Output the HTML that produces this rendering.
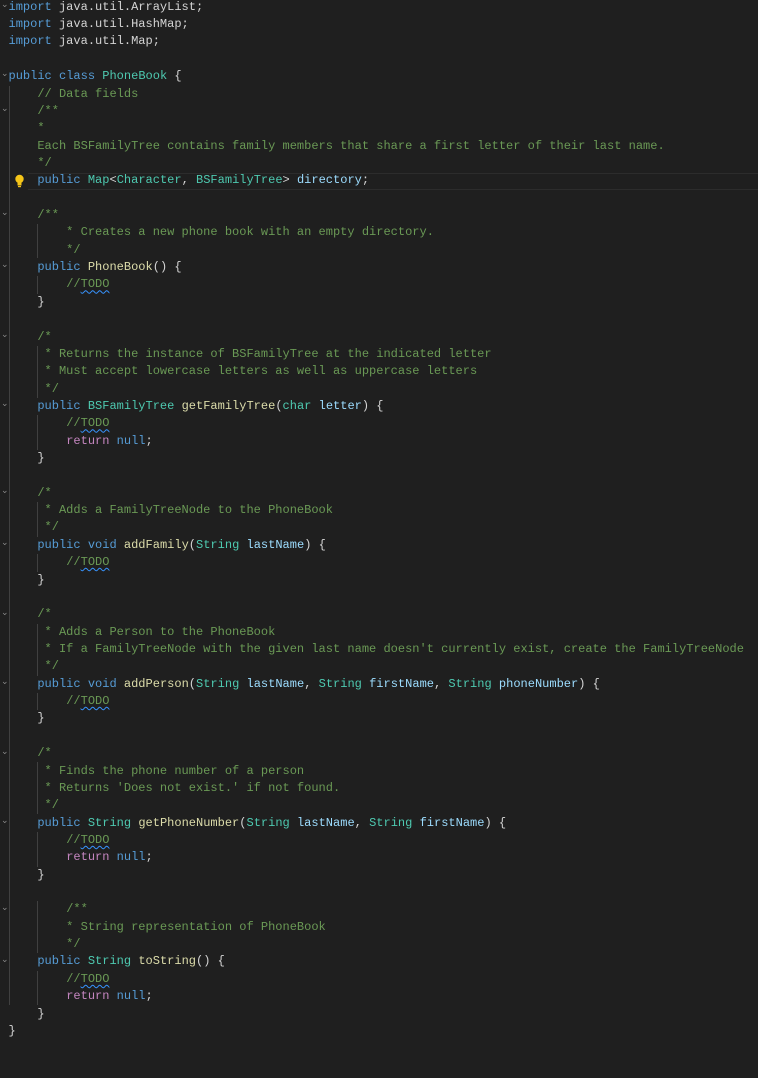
<!DOCTYPE html>
<html><head><meta charset="utf-8"><style>
html,body{margin:0;padding:0;background:#1f1f1f;width:758px;height:1078px;overflow:hidden}
#ed{position:absolute;left:8.5px;top:-1.3px;font-family:"Liberation Mono",monospace;font-size:12.03px;line-height:17.36px;color:#d4d4d4;white-space:pre;margin:0}
.k{color:#569cd6}.t{color:#4ec9b0}.f{color:#dcdcaa}.v{color:#9cdcfe}.c{color:#6a9955}.r{color:#c586c0}
.td{text-decoration:underline wavy #3794ff;text-decoration-thickness:1px;text-underline-offset:2px}
.g{position:absolute;width:1px;background:#404040}
.fa{position:absolute;left:1px;color:#8a8a8a;font-size:9px;font-family:"DejaVu Sans",sans-serif}
.cur{position:absolute;left:28px;right:0;height:15px;border-top:1px solid #2c2c2c;border-bottom:1px solid #2c2c2c}
</style></head><body>
<div class="cur" style="top:173px"></div>
<div class="g" style="left:9px;top:85.5px;height:919.8px"></div>
<div class="g" style="left:37px;top:223.7px;height:34.7px"></div>
<div class="g" style="left:37px;top:276.4px;height:17.4px"></div>
<div class="g" style="left:37px;top:345.9px;height:52px"></div>
<div class="g" style="left:37px;top:415.4px;height:34.7px"></div>
<div class="g" style="left:37px;top:502.2px;height:34.7px"></div>
<div class="g" style="left:37px;top:554.4px;height:17.4px"></div>
<div class="g" style="left:37px;top:623.6px;height:52px"></div>
<div class="g" style="left:37px;top:693px;height:17.4px"></div>
<div class="g" style="left:37px;top:762.4px;height:52px"></div>
<div class="g" style="left:37px;top:831.9px;height:34.7px"></div>
<div class="g" style="left:37px;top:901.4px;height:52px"></div>
<div class="g" style="left:37px;top:970.8px;height:34.7px"></div>
<div style="position:absolute;left:15px;top:173.5px;width:9px;height:14px">
<svg width="9" height="14" viewBox="0 0 9 14"><circle cx="4.5" cy="5" r="4.2" fill="#f5c518"/><rect x="2.5" y="8.5" width="4" height="3" fill="#f5c518"/><rect x="3" y="12" width="3" height="1.2" fill="#f5c518"/></svg></div>
<pre id="ed"><span class="k">import</span> java.util.ArrayList;
<span class="k">import</span> java.util.HashMap;
<span class="k">import</span> java.util.Map;

<span class="k">public</span> <span class="k">class</span> <span class="t">PhoneBook</span> {
    <span class="c">// Data fields</span>
    <span class="c">/**</span>
    <span class="c">*</span>
    <span class="c">Each BSFamilyTree contains family members that share a first letter of their last name.</span>
    <span class="c">*/</span>
    <span class="k">public</span> <span class="t">Map</span>&lt;<span class="t">Character</span>, <span class="t">BSFamilyTree</span>&gt; <span class="v">directory</span>;

    <span class="c">/**</span>
<span class="c">        * Creates a new phone book with an empty directory.</span>
<span class="c">        */</span>
    <span class="k">public</span> <span class="f">PhoneBook</span>() {
        <span class="c">//<span class="td">TODO</span></span>
    }

    <span class="c">/*</span>
<span class="c">     * Returns the instance of BSFamilyTree at the indicated letter</span>
<span class="c">     * Must accept lowercase letters as well as uppercase letters</span>
<span class="c">     */</span>
    <span class="k">public</span> <span class="t">BSFamilyTree</span> <span class="f">getFamilyTree</span>(<span class="t">char</span> <span class="v">letter</span>) {
        <span class="c">//<span class="td">TODO</span></span>
        <span class="r">return</span> <span class="k">null</span>;
    }

    <span class="c">/*</span>
<span class="c">     * Adds a FamilyTreeNode to the PhoneBook</span>
<span class="c">     */</span>
    <span class="k">public</span> <span class="k">void</span> <span class="f">addFamily</span>(<span class="t">String</span> <span class="v">lastName</span>) {
        <span class="c">//<span class="td">TODO</span></span>
    }

    <span class="c">/*</span>
<span class="c">     * Adds a Person to the PhoneBook</span>
<span class="c">     * If a FamilyTreeNode with the given last name doesn't currently exist, create the FamilyTreeNode</span>
<span class="c">     */</span>
    <span class="k">public</span> <span class="k">void</span> <span class="f">addPerson</span>(<span class="t">String</span> <span class="v">lastName</span>, <span class="t">String</span> <span class="v">firstName</span>, <span class="t">String</span> <span class="v">phoneNumber</span>) {
        <span class="c">//<span class="td">TODO</span></span>
    }

    <span class="c">/*</span>
<span class="c">     * Finds the phone number of a person</span>
<span class="c">     * Returns 'Does not exist.' if not found.</span>
<span class="c">     */</span>
    <span class="k">public</span> <span class="t">String</span> <span class="f">getPhoneNumber</span>(<span class="t">String</span> <span class="v">lastName</span>, <span class="t">String</span> <span class="v">firstName</span>) {
        <span class="c">//<span class="td">TODO</span></span>
        <span class="r">return</span> <span class="k">null</span>;
    }

        <span class="c">/**</span>
<span class="c">        * String representation of PhoneBook</span>
<span class="c">        */</span>
    <span class="k">public</span> <span class="t">String</span> <span class="f">toString</span>() {
        <span class="c">//<span class="td">TODO</span></span>
        <span class="r">return</span> <span class="k">null</span>;
    }
}
</pre>
<div class="fa" style="top:0px">⌄</div>
<div class="fa" style="top:69px">⌄</div>
<div class="fa" style="top:104px">⌄</div>
<div class="fa" style="top:208px">⌄</div>
<div class="fa" style="top:260px">⌄</div>
<div class="fa" style="top:330px">⌄</div>
<div class="fa" style="top:399px">⌄</div>
<div class="fa" style="top:486px">⌄</div>
<div class="fa" style="top:538px">⌄</div>
<div class="fa" style="top:608px">⌄</div>
<div class="fa" style="top:677px">⌄</div>
<div class="fa" style="top:747px">⌄</div>
<div class="fa" style="top:816px">⌄</div>
<div class="fa" style="top:903px">⌄</div>
<div class="fa" style="top:955px">⌄</div>
</body></html>
